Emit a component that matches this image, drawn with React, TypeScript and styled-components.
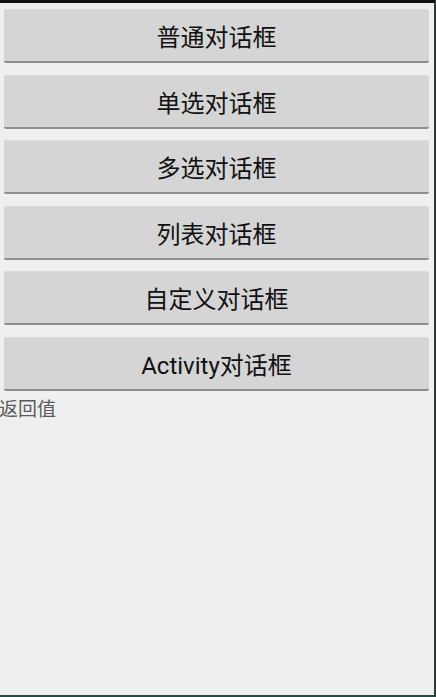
import styled, { createGlobalStyle } from "styled-components";

const GlobalStyle = createGlobalStyle`
  html, body {
    margin: 0;
    padding: 0;
  }
  body {
    font-family: Roboto, "Noto Sans CJK SC", sans-serif;
  }
`;

const Screen = styled.div`
  box-sizing: border-box;
  width: 436px;
  height: 697px;
  background-color: #efefef;
  border-top: 3px solid #111;
  border-right: 2px solid #2f3a38;
  border-bottom: 2px solid #1f4d48;
  overflow: hidden;
  display: flex;
  flex-direction: column;
`;

const ButtonList = styled.div`
  display: flex;
  flex-direction: column;
  gap: 11.6px;
  padding: 6px 5px 0 4px;
`;

const DialogButton = styled.button`
  box-sizing: border-box;
  height: 54px;
  width: 100%;
  margin: 0;
  padding: 0;
  border: none;
  border-top: 1px solid #dcdcdc;
  border-bottom: 2px solid #8e8e8e;
  border-radius: 2px;
  background-color: #d5d5d5;
  color: #111;
  font-family: Roboto, "Noto Sans CJK SC", sans-serif;
  font-size: 24px;
  display: flex;
  align-items: center;
  justify-content: center;
  cursor: pointer;
`;

const ResultText = styled.p`
  margin: 7px 0 0 -1px;
  font-family: Roboto, "Noto Sans CJK SC", sans-serif;
  font-size: 19px;
  line-height: 24px;
  color: #5a5a5a;
`;

const labels = [
  "普通对话框",
  "单选对话框",
  "多选对话框",
  "列表对话框",
  "自定义对话框",
  "Activity对话框",
];

const App = () => {
  return (
    <>
      <GlobalStyle />
      <Screen>
        <ButtonList>
          {labels.map((label) => (
            <DialogButton key={label}>{label}</DialogButton>
          ))}
        </ButtonList>
        <ResultText>返回值</ResultText>
      </Screen>
    </>
  );
};

export default App;
